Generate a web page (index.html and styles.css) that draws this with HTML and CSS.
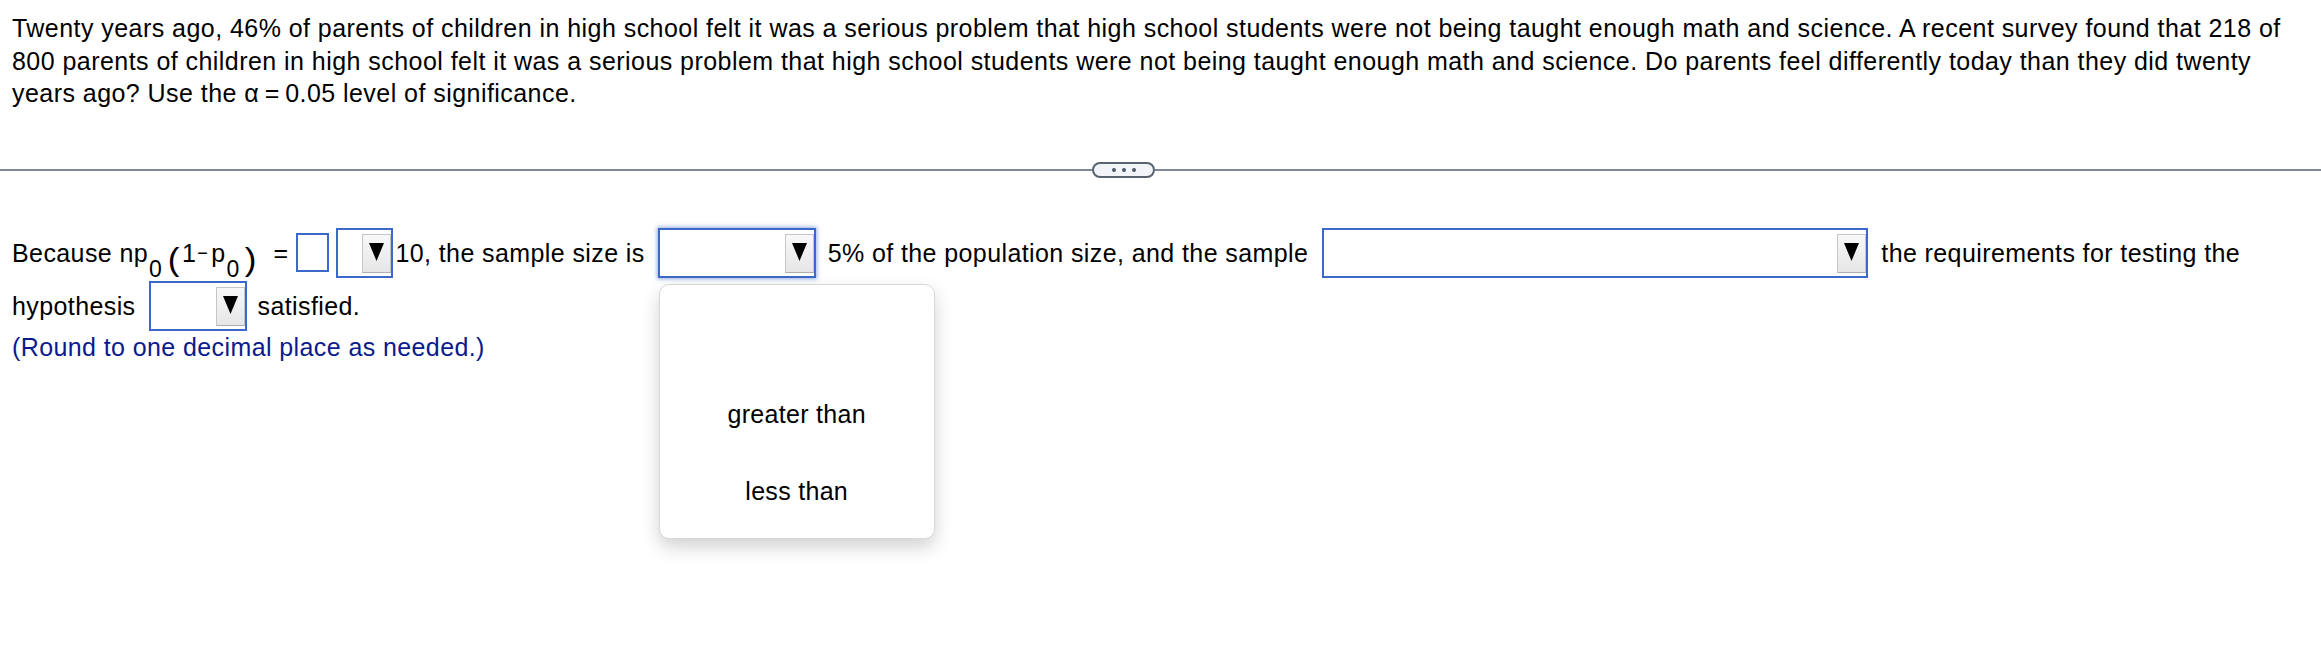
FILE: index.html
```html
<!DOCTYPE html>
<html lang="en">
<head>
<meta charset="utf-8">
<title>Hypothesis test requirements</title>
<link rel="stylesheet" href="styles.css">
</head>
<body>
<div class="question">
  <p class="stem">Twenty years ago, 46% of parents of children in high school felt it was a serious problem that high school students were not being taught enough math and science. A recent survey found that 218 of 800 parents of children in high school felt it was a serious problem that high school students were not being taught enough math and science. Do parents feel differently today than they did twenty years ago? Use the α&thinsp;=&thinsp;0.05 level of significance.</p>
</div>

<div class="divider">
  <span class="rule rule-left"></span>
  <span class="pill"><i></i><i></i><i></i></span>
  <span class="rule rule-right"></span>
</div>

<div class="answer">
  <div class="row row-1">
    <span class="math">Because np<span class="sub">0</span><span class="paren lp">(</span>1<span class="minus">−</span>p<span class="sub">0</span><span class="paren rp">)</span><span class="eq">=</span></span>
    <span class="numbox"></span>
    <span class="dd dd-w1"><span class="dd-btn"><svg width="15" height="18" viewBox="0 0 15 18"><polygon points="0,0 15,0 7.5,18" fill="#000"/></svg></span></span>
    <span class="txt t-10">10, the sample size is</span>
    <span class="dd dd-w2 dd-open">
      <span class="dd-btn"><svg width="15" height="18" viewBox="0 0 15 18"><polygon points="0,0 15,0 7.5,18" fill="#000"/></svg></span>
      <span class="menu">
        <span class="opt"></span>
        <span class="opt">greater than</span>
        <span class="opt">less than</span>
      </span>
    </span>
    <span class="txt t-5">5% of the population size, and the sample</span>
    <span class="dd dd-w3"><span class="dd-btn"><svg width="15" height="18" viewBox="0 0 15 18"><polygon points="0,0 15,0 7.5,18" fill="#000"/></svg></span></span>
    <span class="txt t-req">the requirements for testing the</span>
  </div>
  <div class="row row-2">
    <span class="txt">hypothesis</span>
    <span class="dd dd-w4"><span class="dd-btn"><svg width="15" height="18" viewBox="0 0 15 18"><polygon points="0,0 15,0 7.5,18" fill="#000"/></svg></span></span>
    <span class="txt t-sat">satisfied.</span>
  </div>
  <p class="hint">(Round to one decimal place as needed.)</p>
</div>
</body>
</html>
```

FILE: styles.css
```css
html, body {
  margin: 0;
  padding: 0;
  background: #ffffff;
}

body {
  min-height: 668px;
  font-family: "Liberation Sans", Arial, Helvetica, sans-serif;
  font-size: 25px;
  color: #000000;
}

.question {
  padding: 12px 16px 0 12px;
  letter-spacing: 0.45px;
}

.stem {
  margin: 0;
  line-height: 32.5px;
}

/* divider with the "..." pill */
.divider {
  display: flex;
  align-items: center;
  height: 16px;
  margin-top: 52px;
}

.rule {
  height: 2px;
  background: #7f8898;
}

.rule-left {
  width: 1092px;
  flex: none;
}

.rule-right {
  flex: 1;
}

.pill {
  box-sizing: border-box;
  width: 63px;
  height: 16px;
  border: 2px solid #59636f;
  border-radius: 8px;
  background: #f2f4f7;
  display: flex;
  align-items: center;
  justify-content: center;
  gap: 6px;
  flex: none;
}

.pill i {
  width: 4px;
  height: 4px;
  border-radius: 50%;
  background: #4f5965;
}

/* answer area */
.answer {
  margin-top: 50px;
  padding-left: 12px;
  letter-spacing: 0.4px;
}

.row {
  display: flex;
  align-items: center;
  height: 50px;
  white-space: nowrap;
}

.row-2 {
  margin-top: 3px;
}

.math,
.txt {
  line-height: 32px;
}

.sub {
  font-size: 23px;
  vertical-align: -15px;
  line-height: 0;
  margin-left: 1px;
}

.paren {
  display: inline-block;
  font-size: 28px;
  line-height: 24px;
  transform: translateY(7px) scale(1.25, 1.1);
}

.lp {
  margin: 0 3px 0 7px;
}

.rp {
  margin: 0 0 0 6px;
}

.minus {
  display: inline-block;
  font-size: 18px;
  line-height: 18px;
  margin: 0 3px 0 1px;
  transform: translateY(-3px);
}

.eq {
  margin-left: 18px;
}

.numbox {
  box-sizing: border-box;
  width: 33px;
  height: 39px;
  border: 2px solid #3c69c9;
  margin-left: 8px;
  flex: none;
}

.dd {
  box-sizing: border-box;
  height: 50px;
  border: 2px solid #3c69c9;
  background: #ffffff;
  display: flex;
  align-items: center;
  justify-content: flex-end;
  flex: none;
  position: relative;
}

.dd-w1 { width: 57px; margin-left: 7px; }
.dd-w2 { width: 158px; margin-left: 13px; }
.dd-w3 { width: 546px; margin-left: 14px; }
.dd-w4 { width: 98px; margin-left: 13px; }

.dd-open {
  box-shadow: 0 0 4px 1px rgba(61, 107, 200, 0.55);
}

.dd-btn {
  box-sizing: border-box;
  width: 29px;
  height: 39px;
  margin-top: 1px;
  border: 1px solid #c6c6c6;
  border-bottom-color: #aeaeae;
  background: linear-gradient(#f8f8f8, #e6e6e6);
  display: flex;
  align-items: center;
  justify-content: center;
  padding-bottom: 3px;
}

.dd-btn svg {
  display: block;
}

.t-10 { margin-left: 2px; }
.t-5 { margin-left: 12px; }
.t-req { margin-left: 13px; }
.t-sat { margin-left: 11px; }

/* open dropdown menu */
.menu {
  position: absolute;
  left: -1px;
  top: 54px;
  width: 276px;
  height: 255px;
  box-sizing: border-box;
  border: 1px solid #d8d8d8;
  border-radius: 10px;
  background: #ffffff;
  box-shadow: 0 8px 18px rgba(0, 0, 0, 0.18);
  padding: 14px 0 8px;
  display: flex;
  flex-direction: column;
  z-index: 10;
}

.opt {
  display: block;
  height: 77px;
  line-height: 77px;
  text-align: center;
  letter-spacing: 0.3px;
}

.hint {
  margin: 0;
  line-height: 32px;
  color: #0b1a8c;
}
```
